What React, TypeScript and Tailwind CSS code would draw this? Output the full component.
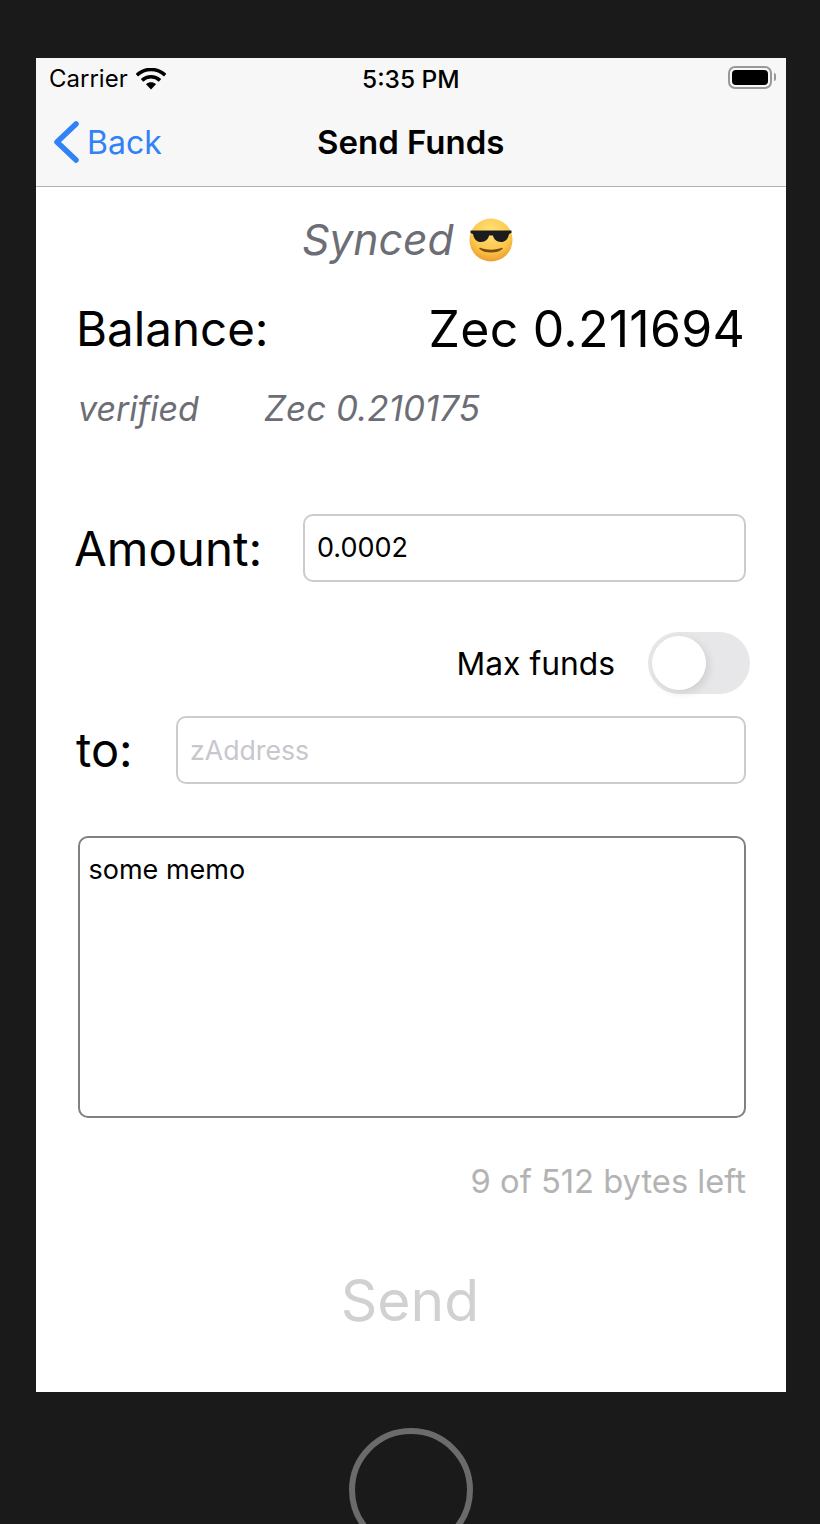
import React from 'react';

function WifiIcon() {
  return (
    <svg width="30" height="22" viewBox="0 0 30 22" fill="none">
      <path d="M0.8 7.2C8.8 -0.4 21.2 -0.4 29.2 7.2" stroke="#000" strokeWidth="3.6" />
      <path d="M6 12.4C11.3 7.6 18.7 7.6 24 12.4" stroke="#000" strokeWidth="3.6" />
      <path d="M10 16.2L15 21.5L20 16.2C17 13.6 13 13.6 10 16.2Z" fill="#000" />
    </svg>
  );
}

function BatteryIcon() {
  return (
    <div className="flex items-center mb-[4px]">
      <div className="w-[44px] h-[23px] rounded-[7px] border-2 border-[#999999] p-[2px]">
        <div className="w-full h-full rounded-[4px] bg-black" />
      </div>
      <div className="ml-[2px] w-[2px] h-[8px] rounded-r-sm bg-[#999999]" />
    </div>
  );
}

function SunglassesEmoji() {
  return (
    <svg width="46" height="46" viewBox="0 0 46 46">
      <defs>
        <radialGradient id="face" cx="50%" cy="30%" r="72%">
          <stop offset="0%" stopColor="#ffe27a" />
          <stop offset="65%" stopColor="#fbc64a" />
          <stop offset="100%" stopColor="#ea9a2c" />
        </radialGradient>
      </defs>
      <circle cx="23" cy="23" r="21.5" fill="url(#face)" />
      <path d="M2.5 13.5H43.5V16L41 17C40 22.5 37 25 33 25C28.5 25 25.5 22 25 18.5H21C20.5 22 17.5 25 13 25C9 25 6 22.5 5 17L2.5 16Z" fill="#1c1c1e" />
      <path d="M12 31.5C17 36 29 36 34 31.5C29 34 17 34 12 31.5Z" fill="#7a4a12" stroke="#7a4a12" strokeWidth="1.4" strokeLinejoin="round" />
    </svg>
  );
}

function StatusBar() {
  return (
    <div className="h-[42px] flex items-center justify-between pl-[13px] pr-[10px] relative">
      <div className="flex items-center gap-[8px] text-[24px] text-black">
        <span>Carrier</span>
        <WifiIcon />
      </div>
      <div className="absolute left-[326px] top-[6px] text-[24.5px] leading-[30px] font-medium text-black">5:35 PM</div>
      <BatteryIcon />
    </div>
  );
}

function NavBar() {
  return (
    <div className="h-[87px] border-b border-[#b2b2b2] flex items-center pl-[17px] relative">
      <svg width="26" height="42" viewBox="0 0 26 42" fill="none" className="mb-[2px]">
        <path d="M23 3L4 21L23 39" stroke="#3182f6" strokeWidth="5.5" strokeLinecap="round" strokeLinejoin="round" />
      </svg>
      <span className="ml-[8px] text-[32px] leading-[44px] text-[#3182f6]">Back</span>
      <span className="absolute left-[281px] top-[20px] text-[33px] leading-[44px] font-semibold text-black">Send Funds</span>
    </div>
  );
}

function TextField({ value, placeholder, className }: { value?: string; placeholder?: string; className: string }) {
  return (
    <div className={`h-[68px] rounded-[10px] border-2 border-[#cccccc] flex items-center pl-[12px] ${value ? 'text-[27px] text-black' : 'text-[26.7px] text-[#c7c7cd]'} ${className}`}>
      {value || placeholder}
    </div>
  );
}

export default function App() {
  return (
    <div className="h-[1524px] bg-[#1a1a1a] pt-[58px] overflow-hidden flex flex-col items-center font-['Inter',sans-serif]">
      <div className="w-[750px] h-[1334px] bg-white shrink-0 self-start ml-[36px]">
        <div className="bg-[#f7f7f8]">
          <StatusBar />
          <NavBar />
        </div>

        <div className="h-[106px] pl-[266px] flex items-center gap-[14px]">
          <span className="text-[42.7px] leading-[52px] italic text-[#6d6e75]">Synced</span>
          <SunglassesEmoji />
        </div>

        <div className="h-[72px] pl-[40px] pr-[41px] flex items-center justify-between text-black">
          <span className="text-[47.5px]">Balance:</span>
          <span className="text-[50px] tracking-[0.25px]">Zec 0.211694</span>
        </div>

        <div className="h-[86px] pl-[42px] flex items-center italic text-[#6d6e75]">
          <span className="w-[186px] text-[34px]">verified</span>
          <span className="text-[35px]">Zec 0.210175</span>
        </div>

        <div className="mt-[63px] pl-[38px] pr-[40px] flex items-center">
          <span className="w-[229px] text-[47.5px] leading-[68px] translate-y-[1px] text-black">Amount:</span>
          <TextField value="0.0002" className="flex-1" />
        </div>

        <div className="mt-[50px] h-[62px] pr-[36px] flex items-center justify-end">
          <span className="mr-[33px] text-[31.8px] translate-y-[1px] text-black">Max funds</span>
          <div className="w-[102px] h-[62px] rounded-full bg-[#e7e7e9] relative">
            <div className="absolute left-[4px] top-[4px] w-[54px] h-[54px] rounded-full bg-white shadow-[3px_3px_8px_rgba(0,0,0,0.1)]" />
          </div>
        </div>

        <div className="mt-[22px] pl-[40px] pr-[40px] flex items-center">
          <span className="w-[100px] text-[47px] leading-[68px] text-black">to:</span>
          <TextField placeholder="zAddress" className="flex-1" />
        </div>

        <div className="mt-[52px] ml-[42px] mr-[40px] h-[282px] rounded-[10px] border-2 border-[#808080] pl-[8.5px] pt-[15px] text-[27px] leading-[34px] text-black">
          some memo
        </div>

        <div className="mt-[40px] pr-[40px] text-right text-[32.7px] leading-[46px] text-[#b3b3b3]">9 of 512 bytes left</div>

        <div className="mt-[61px] pr-[2px] text-center text-[57px] leading-[72px] text-[#d1d1d1]">Send</div>
      </div>

      <div className="mt-[36px] w-[124px] h-[124px] rounded-full border-[6px] border-[#6b6b6b] shrink-0 translate-x-[1px]" />
    </div>
  );
}
